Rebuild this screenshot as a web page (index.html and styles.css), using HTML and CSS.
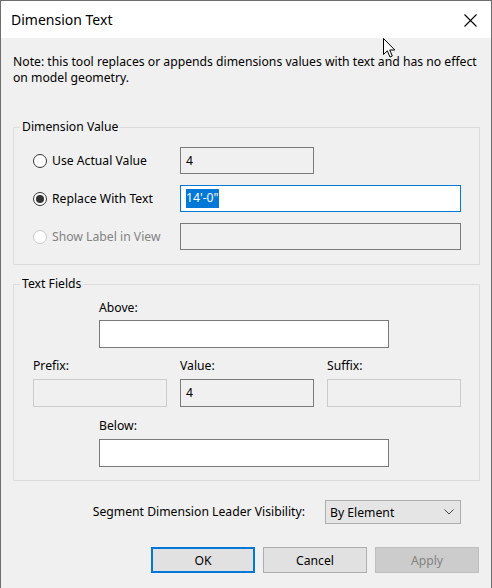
FILE: index.html
```html
<!DOCTYPE html>
<html lang="en">
<head>
<meta charset="utf-8">
<title>Dimension Text</title>
<link rel="stylesheet" href="styles.css">
</head>
<body>
<div class="window">
  <div class="titlebar">
    <span class="title">Dimension Text</span>
    <svg class="close" width="13" height="13" viewBox="0 0 13 13"><path d="M0.5 0.5 L12.5 12.5 M12.5 0.5 L0.5 12.5" stroke="#000" stroke-width="1.1" fill="none"/></svg>
  </div>
  <div class="content">
    <p class="note">Note: this tool replaces or appends dimensions values with text and has no effect<br>on model geometry.</p>

    <fieldset class="group group-value">
      <legend>Dimension Value</legend>
      <div class="vrow">
        <label class="radio"><span class="dot"></span>Use Actual Value</label>
        <div class="box box-ro short">4</div>
      </div>
      <div class="vrow">
        <label class="radio checked"><span class="dot"></span>Replace With Text</label>
        <div class="box box-focus"><span class="sel">14'-0"</span></div>
      </div>
      <div class="vrow">
        <label class="radio disabled"><span class="dot"></span>Show Label in View</label>
        <div class="box box-ro"></div>
      </div>
    </fieldset>

    <fieldset class="group group-fields">
      <legend>Text Fields</legend>
      <div class="center-field">
        <div class="flabel">Above:</div>
        <div class="box box-white wide"></div>
      </div>
      <div class="three">
        <div class="col">
          <div class="flabel">Prefix:</div>
          <div class="box box-dis"></div>
        </div>
        <div class="col">
          <div class="flabel">Value:</div>
          <div class="box box-ro">4</div>
        </div>
        <div class="col">
          <div class="flabel">Suffix:</div>
          <div class="box box-dis"></div>
        </div>
      </div>
      <div class="center-field below">
        <div class="flabel">Below:</div>
        <div class="box box-white wide"></div>
      </div>
    </fieldset>

    <div class="leader-row">
      <span class="leader-label">Segment Dimension Leader Visibility:</span>
      <div class="select">
        <span>By Element</span>
        <svg class="chev" width="10" height="6" viewBox="0 0 10 6"><path d="M0.5 0.5 L5 5 L9.5 0.5" stroke="#444" stroke-width="1" fill="none"/></svg>
      </div>
    </div>

    <div class="buttons">
      <button class="btn btn-default">OK</button>
      <button class="btn">Cancel</button>
      <button class="btn btn-disabled">Apply</button>
    </div>
  </div>
  <svg class="cursor" width="13" height="21" viewBox="0 0 13 21"><path d="M0.5 0.5 L0.5 16.5 L4.3 12.8 L7 19 L9.3 18 L6.7 12 L11.8 12 Z" fill="#fff" stroke="#000" stroke-width="1" stroke-linejoin="miter"/></svg>
</div>
</body>
</html>
```
FILE: styles.css
```css
* { box-sizing: border-box; }
html, body { margin: 0; padding: 0; }
body {
  font-family: "Noto Sans", "Open Sans", sans-serif;
  font-size: 12.2px;
  color: #000;
  background: #f0f0f0;
}
.window {
  position: relative;
  width: 492px;
  height: 588px;
  border: 1px solid #6e6e6e;
  border-bottom: none;
  background: #f0f0f0;
  display: flex;
  flex-direction: column;
  overflow: hidden;
}
.titlebar {
  height: 37px;
  background: #fff;
  display: flex;
  align-items: center;
  justify-content: space-between;
  padding: 0 14px 0 10px;
}
.title {
  font-size: 14px;
  line-height: 18px;
  padding-top: 1px;
}
.close { display: block; margin-top: 1px; }
.content {
  padding: 16px 11px 0 12px;
}
.note {
  margin: 0;
  line-height: 15.5px;
  white-space: nowrap;
}
.group {
  margin: 0;
  border: 1px solid #dcdcdc;
  min-width: 0;
}
.group legend {
  padding: 0 2px;
  margin-left: -13px;
  line-height: 16px;
}
.group-value {
  margin-top: 34px;
  padding: 12px 18px 14px 19px;
  display: flex;
  flex-direction: column;
  gap: 11px;
}
.vrow {
  display: grid;
  grid-template-columns: 147px 1fr;
  align-items: center;
  height: 27px;
}
.radio {
  display: flex;
  align-items: center;
  gap: 5px;
  line-height: 16px;
}
.dot {
  width: 14px;
  height: 14px;
  border: 1px solid #333;
  border-radius: 50%;
  background: #fff;
  display: flex;
  align-items: center;
  justify-content: center;
  flex: none;
}
.radio.checked .dot::after {
  content: "";
  width: 8px;
  height: 8px;
  border-radius: 50%;
  background: #333;
}
.radio.disabled { color: #838383; }
.radio.disabled .dot { border-color: #c8c8c8; }
.box {
  height: 27px;
  border: 1px solid #7a7a7a;
  padding: 0 5px;
  display: flex;
  align-items: center;
  line-height: 16px;
}
.box-ro { background: #f0f0f0; }
.box-focus { background: #fff; border-color: #0078d7; }
.box-white { background: #fff; height: 28px; }
.box-dis { background: #f0f0f0; border-color: #cccccc; height: 28px; }
.group-fields .box-ro { height: 28px; }
.short { width: 134px; }
.sel {
  background: #0078d7;
  color: #fff;
  padding: 1px 0 2px;
}
.group-fields {
  margin-top: 11px;
  padding: 8px 18px 13px 19px;
}
.flabel { line-height: 16px; }
.center-field { margin-left: 66px; }
.center-field .flabel { margin-bottom: 4px; }
.wide { width: 290px; }
.three {
  display: grid;
  grid-template-columns: 134px 134px 134px;
  column-gap: 13px;
  margin-top: 10px;
}
.three .flabel { margin-bottom: 5px; }
.below { margin-top: 11px; }
.below .flabel { margin-bottom: 5px; }
.leader-row {
  margin-top: 19px;
  display: flex;
  align-items: center;
  justify-content: flex-end;
  padding-right: 19px;
}
.leader-label { margin-right: 20px; line-height: 16px; }
.select {
  width: 136px;
  height: 24px;
  border: 1px solid #adadad;
  background: #e5e5e5;
  display: flex;
  align-items: center;
  justify-content: space-between;
  padding: 0 6px 0 4px;
}
.chev { display: block; }
.buttons {
  margin-top: 23px;
  display: flex;
  justify-content: flex-end;
  gap: 8px;
  padding-right: 1px;
}
.btn {
  width: 104px;
  height: 26px;
  border: 1px solid #adadad;
  background: #e1e1e1;
  font: inherit;
  color: #000;
  padding: 0;
}
.btn-default { border: 2px solid #0078d7; }
.btn-disabled { background: #cccccc; border-color: #bfbfbf; color: #838383; }
.cursor {
  position: absolute;
  left: 382px;
  top: 37px;
}
```
